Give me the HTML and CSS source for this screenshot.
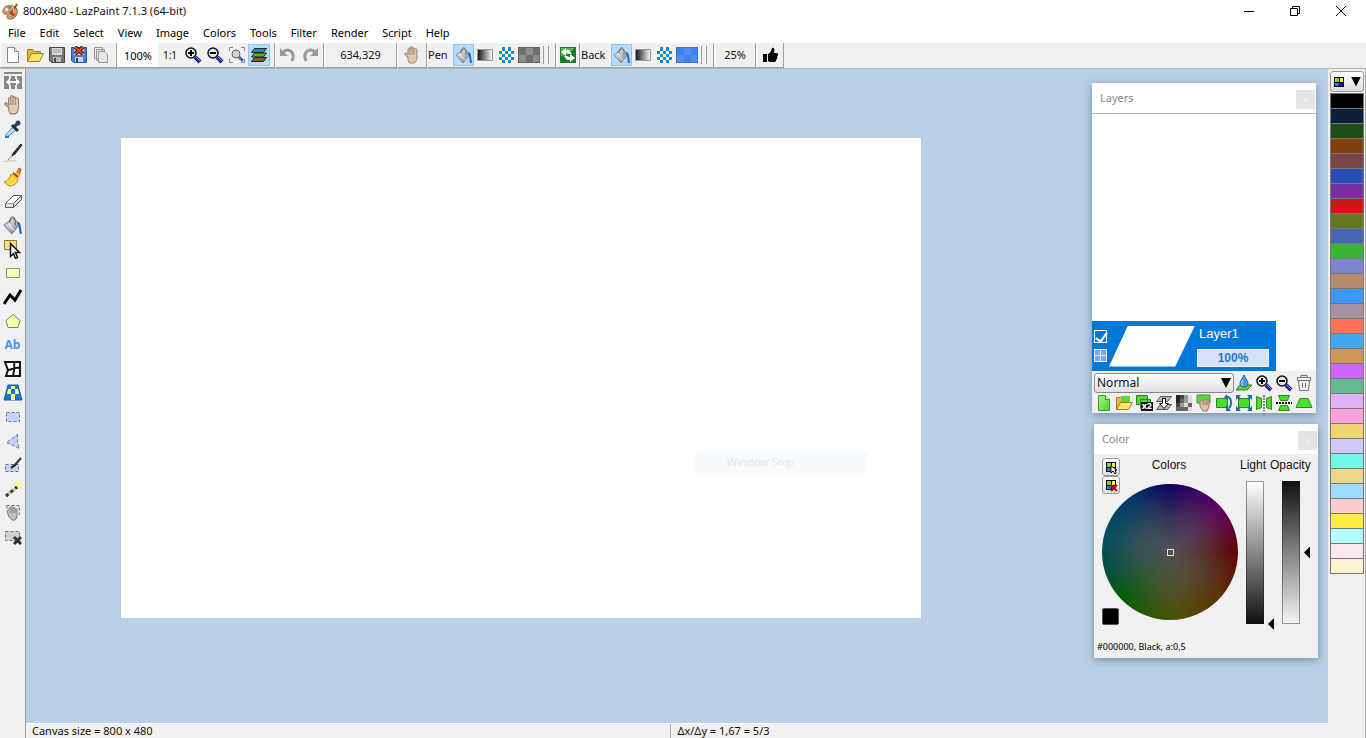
FILE: index.html
```html
<!DOCTYPE html>
<html lang="en">
<head>
    <meta charset="UTF-8">
    <meta name="viewport" content="width=device-width, initial-scale=1.0">
    <title>800x480 - LazPaint 7.1.3 (64-bit)</title>
    <link rel="stylesheet" href="styles.css">
</head>
<body>
    <!-- Shared icons -->
    <svg class="sprites" aria-hidden="true">
        <defs>
            <linearGradient id="metal" x1="0" y1="0" x2="1" y2="1">
                <stop offset="0" stop-color="#fafafa"/><stop offset="0.5" stop-color="#b8bcc4"/><stop offset="1" stop-color="#6a7080"/>
            </linearGradient>
            <linearGradient id="fade" x1="0" x2="1"><stop offset="0" stop-color="#111"/><stop offset="1" stop-color="#fff"/></linearGradient>
            <linearGradient id="green" x1="0" y1="0" x2="1" y2="1"><stop offset="0" stop-color="#a4f48a"/><stop offset="1" stop-color="#48d829"/></linearGradient>
        </defs>
        <symbol id="i-bucket" viewBox="0 0 18 18">
            <path d="M9 3 1 9l7 8 7-9z" fill="url(#metal)" stroke="#808690"/>
            <path d="M5 8l5 6" stroke="#fff" stroke-opacity=".8"/>
            <path d="M6 7c0-6 4-7 5-2v4" fill="none" stroke="#666"/>
            <path d="M13 7c2 0 2 3 3 10" fill="none" stroke="#2468c8" stroke-width="2"/>
        </symbol>
        <symbol id="i-zoomin" viewBox="0 0 18 18">
            <path d="M11 11l5 5" stroke="#22229a" stroke-width="4"/><path d="M11 10l5 5" stroke="#8c8ce8"/>
            <circle cx="7" cy="7" r="5" fill="#d9eee6" stroke="#111" stroke-width="1.5"/>
            <path d="M4 7h6M7 4v6" stroke="#000" stroke-width="2"/>
        </symbol>
        <symbol id="i-zoomout" viewBox="0 0 18 18">
            <path d="M11 11l5 5" stroke="#22229a" stroke-width="4"/><path d="M11 10l5 5" stroke="#8c8ce8"/>
            <circle cx="7" cy="7" r="5" fill="#d9eee6" stroke="#111" stroke-width="1.5"/>
            <path d="M4 7h6" stroke="#000" stroke-width="2"/>
        </symbol>
        <symbol id="i-hand" viewBox="0 0 18 18">
            <path d="M5 11 2 9c-1-2 1-3 2-1l1 1V4c0-2 2-2 2 0V2c0-2 2-2 2 0v1c0-2 2-2 2 0v1c0-2 3-2 3 0v7c0 3-1 5-3 6H7c-2-1-2-3-2-6z" fill="#e2c9ae" stroke="#95816c"/>
            <path d="M7 4v5M9 3v6M11 4v5" stroke="#a28c76"/>
        </symbol>
        <symbol id="i-gradient" viewBox="0 0 16 12"><path d="M.5.5h15v11H.5z" fill="url(#fade)" stroke="#999"/></symbol>
        <symbol id="i-checker" viewBox="0 0 16 16">
            <path d="M0 0h16v16H0z" fill="#fffbd0"/>
            <path d="M4 0h3v4H4zM10 0h3v4h-3zM1 4h3v3H1zM7 4h3v3H7zM13 4h3v3h-3zM4 7h3v3H4zM10 7h3v3h-3zM1 10h3v3H1zM7 10h3v3H7zM13 10h3v3h-3zM4 13h3v3H4zM10 13h3v3h-3z" fill="#1685dc"/>
        </symbol>
        <symbol id="i-palette" viewBox="0 0 12 12">
            <path d="M1 1h10v10H1z" fill="#000"/>
            <path d="M2 2h4v4H2z" fill="#87ce2c"/><path d="M7 2h3v4H7z" fill="#fff833"/>
            <path d="M2 7h4v3H2z" fill="#2c7cdc"/><path d="M7 7h3v3H7z" fill="#1212c0"/>
        </symbol>
    </svg>

    <header class="titlebar">
        <svg class="app-icon" viewBox="0 0 18 18">
            <path d="M1 9c0-5 5-7 9-6 4 0 7 3 6 8-1 4-4 6-8 6-3 0-3-2-2-4 0-2-5 0-5-4z" fill="#cf9c6f" stroke="#8c5b3c"/>
            <circle cx="5" cy="7" r="1.6" fill="#f6f2e8"/><circle cx="8" cy="5" r="1.4" fill="#4a8cc4"/><circle cx="12" cy="12" r="1.8" fill="#d2382c"/><circle cx="9" cy="10" r="1.4" fill="#58a040"/>
            <path d="M16 1 9 12" stroke="#a43c22" stroke-width="2"/><path d="M11 1l2 10" stroke="#e8c060" stroke-width="1.5"/>
        </svg>
        <h1>800x480 - LazPaint 7.1.3 (64-bit)</h1>
        <div class="window-buttons">
            <button aria-label="Minimize"><svg width="12" height="12"><path d="M1 6.5h10" stroke="#000"/></svg></button>
            <button aria-label="Restore"><svg width="12" height="12" fill="none" stroke="#000"><path d="M1.500 3.500h7v7h-7zM3.500 3V1.500h7v7H9"/></svg></button>
            <button aria-label="Close"><svg width="12" height="12"><path d="M1 1l10 10M11 1 1 11" stroke="#000"/></svg></button>
        </div>
    </header>

    <nav class="menubar">
        <a href="#">File</a>
        <a href="#">Edit</a>
        <a href="#">Select</a>
        <a href="#">View</a>
        <a href="#">Image</a>
        <a href="#">Colors</a>
        <a href="#">Tools</a>
        <a href="#">Filter</a>
        <a href="#">Render</a>
        <a href="#">Script</a>
        <a href="#">Help</a>
    </nav>

    <div class="toolbar">
        <div class="group files">
            <button aria-label="New"><svg viewBox="0 0 18 18"><path d="M3.500 1.500h7l4 4v11h-11z" fill="#fff" stroke="#888"/><path d="M10.500 1.500v4h4" fill="#eee" stroke="#888"/></svg></button>
            <button aria-label="Open"><svg viewBox="0 0 18 18"><path d="M1.500 15.500v-12h5l2 2h6v3" fill="#e8b84a" stroke="#a77c1a"/><path d="M1.500 15.500l4-8h12l-4 8z" fill="#ffe574" stroke="#a77c1a"/></svg></button>
            <button aria-label="Save"><svg viewBox="0 0 18 18"><path d="M1.500 1.500h15v15h-13l-2-2z" fill="#777" stroke="#444"/><path d="M4 2h10v7H4z" fill="#ddd"/><path d="M5 11h8v5H5z" fill="#bbb"/><path d="M6 12h2v4H6z" fill="#444"/><path d="M5 4h8M5 6h8" stroke="#999"/></svg></button>
            <button aria-label="Save as"><svg viewBox="0 0 18 18"><path d="M1.500 1.500h15v15h-13l-2-2z" fill="#4a80d0" stroke="#2c569c"/><path d="M4 2h10v7H4z" fill="#cddcf4"/><path d="M5 11h8v5H5z" fill="#c5d4ea"/><path d="M6 12h2v4H6z" fill="#234880"/><path d="M5 1l8 7M13 1 5 8" stroke="#3b1510" stroke-width="4"/><path d="M5 1l8 7M13 1 5 8" stroke="#e04a20" stroke-width="2"/></svg></button>
            <button aria-label="Duplicate"><svg viewBox="0 0 18 18" fill="#e6e6e6" stroke="#999"><path d="M2.500 1.500h8v11h-8zM4.500 3.500h8v11h-8z"/><path d="M6.500 5.500h6l3 3v8h-9z"/></svg></button>
        </div>
        <div class="group zoom">
            <input class="zoom-box" type="text" value="100%" aria-label="Zoom">
            <button class="text">1:1</button>
            <button aria-label="Zoom in"><svg><use href="#i-zoomin"/></svg></button>
            <button aria-label="Zoom out"><svg><use href="#i-zoomout"/></svg></button>
            <button aria-label="Zoom to fit"><svg viewBox="0 0 18 18" fill="none"><path d="M1.500 5V1.500H5M13 1.500h3.500V5M1.500 13v3.500H5M13 16.500h3.500V13" stroke="#888"/><path d="M11 11l4 4" stroke="#4860a8" stroke-width="3"/><circle cx="8" cy="8" r="4" fill="#c9d4d4" stroke="#666"/></svg></button>
            <button class="selected" aria-label="Layer window"><svg viewBox="0 0 18 18" stroke="#222"><path d="M1.500 15.500l3-4h12l-3 4z" fill="#9a5527"/><path d="M1.500 11l3-4h12l-3 4z" fill="#41b82b"/><path d="M1.500 6.500l3-4h12l-3 4z" fill="#1786e0"/></svg></button>
        </div>
        <div class="group history">
            <button aria-label="Undo"><svg viewBox="0 0 18 18"><path d="M4 6c5-5 13 0 9 9" fill="none" stroke="#999" stroke-width="3"/><path d="M1 2v8h8z" fill="#999"/></svg></button>
            <button aria-label="Redo"><svg viewBox="0 0 18 18"><path d="M14 6C9 1 1 6 5 15" fill="none" stroke="#999" stroke-width="3"/><path d="M17 2v8H9z" fill="#999"/></svg></button>
        </div>
        <div class="group coords">634,329</div>
        <div class="group single"><button aria-label="Hand"><svg><use href="#i-hand"/></svg></button></div>
        <div class="group fill pen">
            <span>Pen</span>
            <button class="selected" aria-label="Solid pen"><svg><use href="#i-bucket"/></svg></button>
            <button aria-label="Gradient pen"><svg class="flat"><use href="#i-gradient"/></svg></button>
            <button aria-label="Texture pen"><svg class="square"><use href="#i-checker"/></svg></button>
            <button class="swatch grey" aria-label="Pen color"></button>
            <i class="grip"></i>
        </div>
        <div class="group swap">
            <button aria-label="Swap"><svg viewBox="0 0 18 18"><path d="M1 1h16v16H1z" fill="#1c7c2c"/><path d="M2 10V2h14c-3 1-4 7-14 8z" fill="#58b95b"/><path d="M7 2v2h3l3 4h-3L8 7H7v3L2 6z" fill="#fff"/><path d="M11 8l5 4-5 4v-2H8l-3-4h3l2 1h1z" fill="#fff"/></svg></button>
        </div>
        <div class="group fill back">
            <span>Back</span>
            <button class="selected" aria-label="Solid back"><svg><use href="#i-bucket"/></svg></button>
            <button aria-label="Gradient back"><svg class="flat"><use href="#i-gradient"/></svg></button>
            <button aria-label="Texture back"><svg class="square"><use href="#i-checker"/></svg></button>
            <button class="swatch blue" aria-label="Back color"></button>
            <i class="grip"></i>
        </div>
        <div class="group tolerance">25%</div>
        <div class="group like">
            <button aria-label="Like"><svg viewBox="0 0 18 18"><path d="M2 8h4v8H2z"/><path d="M7 8c3-1 3-4 4-6 2-1 3 2 2 5h3c2 1 1 3 0 3 1 1 0 2 0 2 0 2-1 2-1 2 0 2-1 2-2 2H9l-2-1z"/></svg></button>
        </div>
    </div>

    <main>
        <aside class="toolbox">
            <button aria-label="Dock"><svg viewBox="0 0 20 20"><path d="M1 1h18v2H1zM1 5h18v13H1z" fill="#888"/><path d="M7 5v3M13 5v3M7 14v4M13 14v4" stroke="#eee" stroke-width="2"/><path d="M3 11l4-4v3h6V7l4 4-4 4v-3H7v3z" fill="#fff"/></svg></button>
            <button aria-label="Hand"><svg><use href="#i-hand"/></svg></button>
            <button aria-label="Color picker"><svg viewBox="0 0 20 20"><path d="M3 17c-1-2 1-3 2-4l6-6 3 3-7 6c-1 1-3 2-4 1z" fill="#b4dcf4" stroke="#5595bf"/><path d="M9 6l6 6M11 8l4-4" stroke="#1c3450" stroke-width="3"/><circle cx="15" cy="4" r="2.500" fill="#264462"/><path d="M2 18h4" stroke="#1c7ac4" stroke-width="2"/></svg></button>
            <button aria-label="Pen"><svg viewBox="0 0 20 20"><path d="M9 12l2-3 7-8 1 1-7 9-3 2z" fill="#333" stroke="#222"/><path d="M9 12l-4 5" stroke="#888"/><path d="M1 19c4-2 8-1 12-1" fill="none" stroke="#c5c79a"/></svg></button>
            <button aria-label="Brush"><svg viewBox="0 0 20 20"><path d="M1 15c4-1 6-4 7-8l7 5c0 4-4 7-9 7z" fill="#f7d62c" stroke="#b09020"/><path d="M13 7l3-6 2 1-2 7z" fill="#d88934" stroke="#9c6325"/><path d="M9 8l5 4 3-4-4-3z" fill="#f4cc28"/><path d="M10 6l5 4" stroke="#d32b22" stroke-width="2"/><path d="M5 16l5-5M8 18l5-5" stroke="#f8e888"/></svg></button>
            <button aria-label="Eraser"><svg viewBox="0 0 20 20"><path d="M2.500 12.500 10.500 4.500h8l-8 8z" fill="#fff" stroke="#555"/><path d="M2.500 12.500v4h8v-4M10.500 16.500l8-8v-4l-8 8" fill="#e8e4dc" stroke="#555"/></svg></button>
            <button aria-label="Fill"><svg><use href="#i-bucket"/></svg></button>
            <button aria-label="Edit shape"><svg viewBox="0 0 20 20"><path d="M1.500 1.500h12v9h-12z" fill="#f3df87" stroke="#8c7c42"/><path d="M7.500 4.500v13l3-3 2 5 2-1-2-5h4z" fill="#fff" stroke="#111" stroke-width="1.500"/></svg></button>
            <button aria-label="Rectangle"><svg viewBox="0 0 20 20"><path d="M3.500 5.500h13v9h-13z" fill="#fbffb4" stroke="#8a9668"/></svg></button>
            <button aria-label="Polyline"><svg viewBox="0 0 20 20" fill="none"><path d="M1 17l6-9 5 5 6-10" stroke="#000" stroke-width="3"/></svg></button>
            <button aria-label="Polygon"><svg viewBox="0 0 20 20"><path d="M10 3.500l7 6-2 7H5l-2-7z" fill="#f9ffae" stroke="#7c8662"/></svg></button>
            <button class="letters">Ab</button>
            <button aria-label="Deform"><svg viewBox="0 0 20 20" fill="none" stroke="#111"><path d="M2 3h15v14H3l2-6z" fill="#fff" stroke-width="2"/><path d="M11 3c1 5 0 9-1 14M5 11c4 0 6-3 12-2" stroke-width="2"/></svg></button>
            <button aria-label="Texture mapping"><svg viewBox="0 0 20 20"><path d="M5 2h10l4 15H1z" fill="#1478cc" stroke="#146096"/><path d="M8 3h4v3H8zM5 6h3v5H4zM12 6h3l1 5h-4zM8 11h4v6H8z" fill="#fff7a7"/></svg></button>
            <button aria-label="Select rectangle"><svg viewBox="0 0 20 20"><path d="M3.500 5.500h13v9h-13z" fill="#c2d5fd" stroke="#777" stroke-dasharray="3 2"/></svg></button>
            <button aria-label="Select polygon"><svg viewBox="0 0 20 20"><path d="M14.500 3.500v8l2 6-13-6z" fill="#bdd2fa" stroke="#777" stroke-dasharray="3 2"/></svg></button>
            <button aria-label="Select pen"><svg viewBox="0 0 20 20"><path d="M2.500 9.500h13v7h-13z" fill="#bdd2fa" stroke="#777" stroke-dasharray="3 2"/><path d="M11 11l7-8" stroke="#333" stroke-width="2"/><path d="M8 13l4-3" stroke="#111" stroke-width="2"/></svg></button>
            <button aria-label="Magic wand"><svg viewBox="0 0 20 20"><circle cx="15" cy="6" r="4" fill="#f9f795"/><path d="M3 17l11-9" stroke="#c5c5b5" stroke-width="3"/><path d="M3 17l11-9" stroke="#333" stroke-width="3" stroke-dasharray="3 3"/></svg></button>
            <button aria-label="Move selection"><svg viewBox="0 0 20 20"><path d="M3.500 2.500h13v9l-5 6-6-4z" fill="#e0e0e0" stroke="#777" stroke-dasharray="3 2"/><path d="M6 14 4 8l2-1V5h2V4h2v1h2v1h2v8l-2 3H9z" fill="#c0c0c0" stroke="#888"/><path d="M8 5v5M10 5v5M12 6v4" stroke="#888"/></svg></button>
            <button aria-label="Deselect"><svg viewBox="0 0 20 20"><path d="M2.500 4.500h14v9h-14z" fill="#d1d1d1" stroke="#777" stroke-dasharray="3 2"/><path d="M11 10l7 7M18 10l-7 7" stroke="#333" stroke-width="3"/></svg></button>
        </aside>

        <section class="center">
            <div class="workspace">
                <div class="canvas"></div>
                <div class="ghost-menu">Window Snip</div>

                <section class="panel layers">
                    <header><h2>Layers</h2><button aria-label="Close layers">×</button></header>
                    <div class="layer-list">
                        <div class="layer">
                            <div class="layer-flags">
                                <input type="checkbox" aria-label="Visible" checked>
                                <svg viewBox="0 0 13 13"><path d="M0 0h13v13H0z" fill="#eef4ff"/><path d="M1 1h5v5H1zM7 1h5v5H7zM1 7h5v5H1zM7 7h5v5H7z" fill="#76a8ea"/></svg>
                            </div>
                            <div class="thumb"></div>
                            <div class="layer-info">
                                <span>Layer1</span>
                                <div class="opacity">100%</div>
                            </div>
                        </div>
                    </div>
                    <div class="layer-tools">
                        <div class="blend">
                            <select aria-label="Blend mode"><option>Normal</option></select>
                        </div>
                        <button aria-label="Blur"><svg viewBox="0 0 18 18"><path d="M1 16l4-5h12l-5 5z" fill="#55d530" stroke="#357c20"/><path d="M9 1c2 4 4 6 4 9 0 4-8 4-8 0 0-3 2-5 4-9z" fill="#4d98dc" stroke="#315f8c"/><path d="M8 6c-2 3-2 5 0 5" stroke="#c5e4ff" fill="none"/></svg></button>
                        <button aria-label="Zoom in"><svg><use href="#i-zoomin"/></svg></button>
                        <button aria-label="Zoom out"><svg><use href="#i-zoomout"/></svg></button>
                        <button aria-label="Delete"><svg viewBox="0 0 18 18" fill="#eee" stroke="#777"><path d="M3.500 6.500h11l-1 10h-9z"/><path d="M2.500 3.500h13v3h-13zM6 3V1.500h6V3M7.500 9v5M10.500 9v5"/></svg></button>

                        <button aria-label="New layer"><svg viewBox="0 0 18 18"><path d="M3.500 1.500h7l4 4v11h-11z" fill="url(#green)" stroke="#4c8e38"/><path d="M10.500 1.500v4h4" fill="#dfc" stroke="#4c8e38"/></svg></button>
                        <button aria-label="Open layer"><svg viewBox="0 0 18 18"><path d="M1.500 15.500v-12h4l2 2h5v3" fill="#e8b84a" stroke="#a77c1a"/><path d="M6 2h9v7H6z" fill="#5ed83c"/><path d="M1.500 15.500l4-7h12l-4 7z" fill="#ffe574" stroke="#a77c1a"/></svg></button>
                        <button class="times" aria-label="Duplicate layer"><svg viewBox="0 0 18 18"><path d="M1.500 1.500h11v9h-11zM5.500 5.500h10v9h-10z" fill="#52d833" stroke="#358122"/><path d="M6 8h12v9H6z" fill="#111"/></svg><b>x2</b></button>
                        <button aria-label="Merge layer"><svg viewBox="0 0 18 18"><path d="M1.500 7.500l4-5h11l-4 5zM1.500 15.500l4-5h11l-4 5z" fill="#bbb" stroke="#555"/><path d="M7.500 4.500h3v5h3l-4.500 5-4.500-5h3z" fill="#fff" stroke="#111"/></svg></button>
                        <button aria-label="Grid"><svg viewBox="0 0 18 18"><path d="M1 1h16v16H1z" fill="#666"/><path d="M1 1h4v8H1z" fill="#222"/><path d="M1 9h4v4H1zM5 1h4v4H5z" fill="#444"/><path d="M9 1h4v4H9zM5 9h4v4H5zM9 5h4v4H9z" fill="#999"/><path d="M13 1h4v4h-4zM9 9h4v4H9zM13 13h4v4h-4zM13 5h4v4h-4z" fill="#ddd"/></svg></button>
                        <button aria-label="Move layer"><svg viewBox="0 0 18 18"><path d="M2 1h13v8H2z" fill="#5fd441" stroke="#448e32"/><path d="M5 12V8c1-2 2-1 2-2h7v7l-2 4H8z" fill="#dec09e" stroke="#957b5e"/><path d="M8 7v4M10 7v4M12 7v4" stroke="#957b5e"/></svg></button>
                        <button aria-label="Rotate layer"><svg viewBox="0 0 18 18"><path d="M1.500 4.500h11v9h-11z" fill="#48df28" stroke="#36831f"/><path d="M12 3c5 0 5 8 2 11" fill="none" stroke="#1d6e9c" stroke-width="2"/><path d="M12 0v6L9 3zM11 11v6h5z" fill="#1d6e9c"/></svg></button>
                        <button aria-label="Zoom layer"><svg viewBox="0 0 18 18"><path d="M3.500 4.500h11v9h-11z" fill="#48df28" stroke="#36831f"/><path d="M1 1h5L1 6zM17 1v5l-5-5zM1 17v-5l5 5zM17 17h-5l5-5z" fill="#1d6e9c"/><path d="M2 2l3 3M16 2l-3 3M2 16l3-3M16 16l-3-3" stroke="#1d6e9c" stroke-width="2"/></svg></button>
                        <button aria-label="Flip horizontal"><svg viewBox="0 0 18 18"><path d="M1.500 2.500l5 2v9l-5 2zM16.500 2.500l-5 2v9l5 2z" fill="#48df28" stroke="#36831f"/><path d="M9 1v16" stroke="#111" stroke-dasharray="2 1"/></svg></button>
                        <button aria-label="Flip vertical"><svg viewBox="0 0 18 18"><path d="M3.500 1.500h11l-2 5h-7zM3.500 16.500h11l-2-5h-7z" fill="#48df28" stroke="#36831f"/><path d="M1 9h16" stroke="#111" stroke-width="2" stroke-dasharray="2 1"/></svg></button>
                        <button aria-label="Distort"><svg viewBox="0 0 18 18"><path d="M5 4.500h8l4 9H1z" fill="#48df28" stroke="#36831f"/></svg></button>
                    </div>
                </section>

                <section class="panel color">
                    <header><h2>Color</h2><button aria-label="Close color">×</button></header>
                    <div class="color-body">
                        <div class="wheel-column">
                            <div class="wheel-head">
                                <button class="raised" aria-label="Add to palette"><svg viewBox="0 0 16 16"><use href="#i-palette" x="2" y="2" width="12" height="12"/><path d="M8 7v7l2-2 2 3 1-1-1-3h2z" fill="#fff" stroke="#111"/></svg></button>
                                <span>Colors</span>
                                <button class="raised" aria-label="Remove from palette"><svg viewBox="0 0 16 16"><use href="#i-palette" x="2" y="2" width="12" height="12"/><path d="M8 8l6 6M14 8l-6 6" stroke="#c01010" stroke-width="2"/></svg></button>
                            </div>
                            <div class="wheel"><i></i></div>
                            <button class="current" aria-label="Current color"></button>
                        </div>
                        <div class="sliders">
                            <label for="light">Light</label>
                            <label for="opacity">Opacity</label>
                            <input id="light" type="range" min="0" max="100" value="0">
                            <input id="opacity" type="range" min="0" max="100" value="50">
                        </div>
                    </div>
                    <p>#000000, Black, a:0,5</p>
                </section>
            </div>

            <footer class="statusbar">
                <span>Canvas size = 800 x 480</span>
                <span>Δx/Δy = 1,67 = 5/3</span>
            </footer>
        </section>

        <aside class="palette">
            <button class="raised palette-menu" aria-label="Palette"><svg><use href="#i-palette"/></svg><i class="arrow"></i></button>
            <div class="swatches" id="swatches"></div>
        </aside>
    </main>

    <script>
        const colors = [
            '#000000', '#111d3d', '#1d4d1b', '#83400c', '#7c444a', '#2650b8', '#7a2fa0', '#d01616',
            '#677822', '#4866b4', '#3ab236', '#8084d0', '#b8896a', '#3a98ff', '#a891a0', '#ff7058',
            '#44a8f0', '#cc9858', '#cc66ff', '#66b890', '#e0b0f8', '#ffa0e0', '#f0d470', '#d0c8f8',
            '#70f8e8', '#e8d888', '#a0dcff', '#fcccd0', '#ffec40', '#b0fffc', '#fce8f0', '#fbf4d0'
        ];

        const swatches = document.getElementById('swatches');
        colors.forEach(color => {
            const button = document.createElement('button');
            button.style.backgroundColor = color;
            button.setAttribute('aria-label', color);
            swatches.appendChild(button);
        });
    </script>
</body>
</html>
```

FILE: styles.css
```css
* {
    box-sizing: border-box;
}

body {
    margin: 0;
    display: flex;
    flex-direction: column;
    min-height: 100vh;
    background-color: #fff;
    color: #111;
    font-family: "Noto Sans", "Open Sans", sans-serif;
    font-size: 11px;
    line-height: 14px;
}

button {
    display: flex;
    align-items: center;
    justify-content: center;
    margin: 0;
    padding: 0;
    border: none;
    background: none;
    color: inherit;
    font: inherit;
}

svg {
    display: block;
}

h1, h2, p {
    margin: 0;
    font-size: 11px;
    font-weight: normal;
}

.sprites {
    position: absolute;
    width: 0;
    height: 0;
}

/* Title bar */
.titlebar {
    display: flex;
    align-items: center;
    height: 22px;
    padding: 0 2px;
}

.app-icon {
    width: 17px;
    height: 17px;
    margin-right: 4px;
}

.window-buttons {
    display: flex;
    margin-left: auto;
}

.window-buttons button {
    width: 46px;
    height: 22px;
}

/* Menu */
.menubar {
    display: flex;
    align-items: center;
    gap: 14px;
    height: 21px;
    padding: 0 8px;
}

.menubar a {
    color: #000;
    text-decoration: none;
}

/* Toolbar */
.toolbar {
    display: flex;
    height: 26px;
    background-color: #f0f0f0;
    border-bottom: 1px solid #a9b4c0;
}

.group {
    display: flex;
    align-items: center;
    border-right: 1px solid #a0a0a0;
    border-left: 1px solid #fff;
    border-bottom: 1px solid #a0a0a0;
}

.group button {
    width: 22px;
    height: 22px;
}

.group svg {
    width: 18px;
    height: 18px;
}

.group .flat {
    width: 16px;
    height: 12px;
}

.group .square {
    width: 16px;
    height: 16px;
}

.group .selected {
    background-color: #b9dbf5;
    border: 1px solid #8cc4ee;
}

.files {
    width: 117px;
    padding-left: 1px;
}

.zoom {
    width: 158px;
    padding-right: 4px;
}

.zoom-box {
    width: 40px;
    height: 24px;
    padding: 0;
    border: none;
    background-color: #fff;
    font: inherit;
    text-align: center;
}

.zoom .text {
    width: 24px;
    margin-left: auto;
    font-size: 10px;
}

.history {
    width: 49px;
    padding-left: 1px;
}

.coords {
    width: 73px;
    justify-content: center;
}

.single {
    width: 30px;
    justify-content: center;
}

.fill button {
    width: 21px;
}

.pen {
    width: 129px;
}

.back {
    width: 134px;
}

.fill span {
    flex: 1;
}

.fill .swatch {
    width: 22px;
    height: 16px;
    margin: 0 3px 0 2px;
}

.grey {
    background: repeating-conic-gradient(#8d8d8d 0 25%, #707070 0 50%) 0 0 / 14px 14px;
    border: 1px solid #666;
}

.blue {
    background: repeating-conic-gradient(#558df0 0 25%, #3f80ee 0 50%) 0 0 / 14px 14px;
    border: 1px solid #3b70d2;
}

.grip {
    width: 6px;
    height: 18px;
    margin-right: 6px;
    border-left: 1px solid #999;
    border-right: 1px solid #999;
}

.swap {
    width: 24px;
}

.tolerance {
    width: 42px;
    justify-content: center;
}

.like {
    width: 28px;
    justify-content: center;
}

/* Main area */
main {
    display: flex;
    flex: 1;
}

.toolbox {
    width: 26px;
    background-color: #f0f0f0;
    border-right: 1px solid #a0a0a0;
}

.toolbox button {
    width: 25px;
    height: 24px;
}

.toolbox svg {
    width: 20px;
    height: 20px;
}

.toolbox .letters {
    color: #4a98f5;
    font-size: 12px;
    font-weight: bold;
}

.center {
    display: flex;
    flex: 1;
    flex-direction: column;
}

.workspace {
    position: relative;
    flex: 1;
    padding: 69px 95px;
    background-color: #bad0e7;
}

.canvas {
    width: 800px;
    height: 480px;
    background-color: #fff;
}

.ghost-menu {
    position: absolute;
    top: 382px;
    left: 669px;
    width: 173px;
    padding: 4px 32px;
    background-color: #f6fcfd;
    color: #e2e8ea;
}

/* Floating windows */
.panel {
    position: absolute;
    width: 224px;
    background-color: #f0f0f0;
    box-shadow: 0 2px 8px rgba(40, 70, 100, 0.5);
}

.panel header {
    display: flex;
    align-items: center;
    justify-content: space-between;
    height: 30px;
    padding: 0 1px 0 8px;
    background-color: #fff;
    color: #888;
}

.panel header button {
    width: 19px;
    height: 19px;
    margin-top: 3px;
    background-color: #e4e4e4;
    color: #f4f4f4;
}

.layers {
    top: 14px;
    right: 12px;
}

.layer-list {
    display: flex;
    align-items: flex-end;
    height: 258px;
    background-color: #fff;
    border-top: 1px solid #b4b8b4;
}

.layer {
    display: flex;
    align-items: center;
    gap: 2px;
    width: 184px;
    height: 50px;
    padding-left: 2px;
    background-color: #0078d7;
}

.layer-flags {
    display: grid;
    gap: 6px;
}

.layer-flags input {
    appearance: none;
    width: 13px;
    height: 13px;
    margin: 0;
    border: 1px solid #fff;
}

.layer-flags input:checked::before {
    content: "";
    display: block;
    width: 5px;
    height: 10px;
    margin: -1px 0 0 3px;
    border: solid #fff;
    border-width: 0 2px 2px 0;
    transform: rotate(35deg);
}

.layer-flags svg {
    width: 13px;
    height: 13px;
}

.thumb {
    width: 86px;
    height: 41px;
    background-color: #fff;
    clip-path: polygon(22% 0, 100% 0, 77% 100%, 0 100%);
}

.layer-info {
    display: grid;
    gap: 8px;
    padding-top: 2px;
    color: #fff;
    font-family: "Liberation Sans", Arial, sans-serif;
    font-size: 13px;
}

.layer-info span {
    padding-left: 2px;
}

.opacity {
    width: 72px;
    border: 1px solid #eef4ff;
    background-color: #d5e1f7;
    color: #1c78cc;
    font-size: 12px;
    font-weight: bold;
    line-height: 16px;
    text-align: center;
}

.layer-tools {
    display: grid;
    grid-template-columns: repeat(11, 20px);
    grid-auto-rows: 20px;
    padding: 2px 2px 0;
}

.layer-tools button {
    position: relative;
}

.layer-tools svg {
    width: 18px;
    height: 18px;
}

.times b {
    position: absolute;
    right: 2px;
    bottom: 3px;
    color: #fff;
    font-size: 9px;
    line-height: 9px;
}

.blend {
    position: relative;
    grid-column: span 7;
}

.blend select {
    appearance: none;
    width: 100%;
    height: 20px;
    padding: 0 2px;
    border: 1px solid #888;
    border-radius: 3px;
    background: linear-gradient(#fff, #e0e0e0);
    color: #111;
    font: inherit;
    font-size: 12px;
}

.blend::after,
.arrow {
    width: 10px;
    height: 10px;
    background-color: #000;
    clip-path: polygon(0 0, 100% 0, 50% 100%);
}

.blend::after {
    content: "";
    position: absolute;
    top: 5px;
    right: 3px;
    pointer-events: none;
}

/* Color window */
.color {
    top: 355px;
    right: 10px;
}

.color-body {
    display: flex;
    padding: 4px 0 0 8px;
    font-family: "Liberation Sans", Arial, sans-serif;
    font-size: 12px;
}

.wheel-column {
    position: relative;
    width: 136px;
}

.raised {
    border: 1px solid #999;
    border-radius: 3px;
    background: linear-gradient(#fff, #ddd);
}

.wheel-head {
    display: grid;
    grid-template-columns: 18px 1fr 18px;
    height: 26px;
    text-align: center;
}

.wheel-head span {
    padding-right: 2px;
}

.wheel-head .raised {
    grid-column: 1;
    width: 18px;
    height: 18px;
}

.wheel-head svg {
    width: 16px;
    height: 16px;
}

.wheel {
    display: grid;
    place-items: center;
    height: 136px;
    border-radius: 50%;
    background:
        radial-gradient(circle closest-side, #525252, rgba(82, 82, 82, 0.6) 50%, transparent),
        conic-gradient(#0c0060, #3c0060 25deg, #600060 50deg, #640000 90deg, #5c3000 130deg, #505000 175deg, #006000 225deg, #005040 250deg, #005060 285deg, #003468 325deg, #0c0060);
}

.wheel i {
    width: 7px;
    height: 7px;
    border: 1px solid #ddd;
}

.current {
    position: absolute;
    bottom: 5px;
    left: 0;
    width: 17px;
    height: 17px;
    border: 1px solid #555;
    border-radius: 2px;
    background-color: #000;
}

.sliders {
    display: grid;
    grid-template-columns: 30px 42px;
    grid-template-rows: 14px auto;
    row-gap: 3px;
    justify-items: end;
    padding-left: 2px;
}

.sliders label {
    justify-self: start;
}

.sliders input {
    appearance: none;
    writing-mode: vertical-lr;
    direction: rtl;
    width: 30px;
    height: 155px;
    margin: 0;
    background:
        linear-gradient(#fff, #111) 1px 7px / 16px 141px no-repeat,
        linear-gradient(#999, #111) 0 6px / 18px 143px no-repeat;
}

.sliders #light {
    justify-self: start;
    margin-left: 6px;
}

.sliders #opacity {
    background-image: linear-gradient(#111, #f4f4f4), linear-gradient(#111, #999);
}

.sliders input::-webkit-slider-thumb {
    appearance: none;
    width: 6px;
    height: 12px;
    margin-left: 20px;
    background-color: #000;
    clip-path: polygon(100% 0, 100% 100%, 0 50%);
}

.color p {
    padding: 10px 3px 4px;
    color: #000;
    font-size: 9px;
}

/* Status bar */
.statusbar {
    display: grid;
    grid-template-columns: 98fr 100fr;
    height: 15px;
    background-color: #f0f0f0;
    border-top: 1px solid #fff;
}

.statusbar span {
    padding-left: 6px;
}

.statusbar span + span {
    border-left: 1px solid #aaa;
}

/* Palette */
.palette {
    width: 38px;
    padding: 2px;
    background-color: #f0f0f0;
    border-right: 1px solid #aaa;
}

.palette-menu {
    width: 34px;
    height: 21px;
    gap: 6px;
}

.palette-menu svg {
    width: 12px;
    height: 12px;
}

.swatches {
    margin-top: 1px;
    width: 34px;
    border: 1px solid #777;
    border-bottom: none;
}

.swatches button {
    width: 100%;
    height: 15px;
    border-bottom: 1px solid #777;
}
```
